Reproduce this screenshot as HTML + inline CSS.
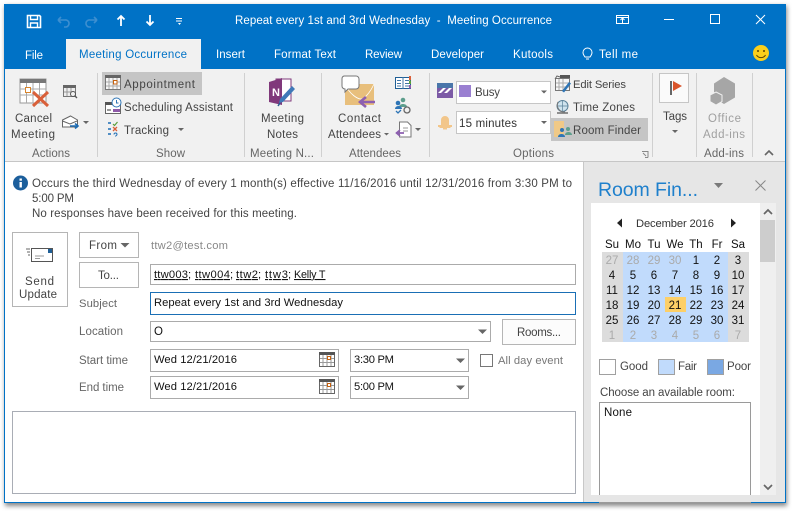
<!DOCTYPE html>
<html><head><meta charset="utf-8"><style>
html,body{margin:0;padding:0;background:#fff;width:792px;height:511px;overflow:hidden}
svg{display:block}
text{font-family:"Liberation Sans",sans-serif;font-size:11.5px;fill:#444;white-space:pre}
.c text{text-anchor:middle;fill:#111}
.c2 text{text-anchor:middle;fill:#aaa}
.b{fill:#fff;stroke:#ababab;stroke-width:1}
.ar{fill:#666}
.s{font-size:11.2px}
</style></head><body>
<svg width="792" height="511" viewBox="0 0 792 511" xmlns="http://www.w3.org/2000/svg" shape-rendering="geometricPrecision">
<defs><filter id="sh" x="-3%" y="-3%" width="106%" height="106%"><feGaussianBlur stdDeviation="2.500"/></filter></defs>
<rect x="0" y="0" width="792" height="511" fill="#fff"/>
<rect x="5" y="6" width="782" height="500" fill="#888" filter="url(#sh)"/>
<rect x="4" y="4" width="782" height="499" fill="#0072c6"/>
<rect x="5" y="69" width="780" height="433" fill="#fff"/>
<!-- ribbon -->
<rect x="5" y="69" width="780" height="92" fill="#f1f1f1"/>
<rect x="5" y="161" width="780" height="1" fill="#c6c6c6"/>
<!-- title bar icons -->
<g fill="none" stroke="#fff">
<path d="M27.500 15.500h12l1 1v11h-13z" stroke-width="1.600"/><path d="M30.500 15.500v4h7v-4M30.500 27v-4h7v4" stroke-width="1.400"/>
<g stroke="#3d8fd0" stroke-width="1.600"><path d="M58 20l3-3m-3 3l3 3m-3-3h7a3.500 3.500 0 0 1 1 7h-2"/><path d="M97 20l-3-3m3 3l-3 3m3-3h-7a3.500 3.500 0 0 0-1 7h2"/></g>
<g stroke-width="1.800"><path d="M121 26v-10m-3.500 3.500l3.500-3.500 3.500 3.500"/><path d="M150 15v10m-3.500-3.500l3.500 3.500 3.500-3.500"/></g>
<path d="M176 18.500h6M176 21h6" stroke-width="1"/>
<rect x="616.500" y="15.500" width="12" height="8"/><path d="M622.500 23v-5m-2 2l2-2 2 2"/><path d="M616 17.500h13"/>
<path d="M664 19.500h10"/><rect x="710.500" y="14.500" width="9" height="9"/><path d="M756 15l9 9m0-9l-9 9"/>
</g>
<path d="M178 23l1.500 2 1.500-2z" fill="#fff"/>
<text x="235" y="24" textLength="317" style="fill:#fff">Repeat every 1st and 3rd Wednesday  -  Meeting Occurrence</text>
<!-- tabs -->
<rect x="66" y="39" width="135" height="31" fill="#f1f1f1"/>
<text x="25" y="59" textLength="18" style="fill:#fff">File</text>
<text x="216" y="58" textLength="29" style="fill:#fff">Insert</text>
<text x="274" y="58" textLength="62" style="fill:#fff">Format Text</text>
<text x="365" y="58" textLength="37" style="fill:#fff">Review</text>
<text x="431" y="58" textLength="53" style="fill:#fff">Developer</text>
<text x="513" y="58" textLength="40" style="fill:#fff">Kutools</text>
<text x="599" y="58" textLength="39" style="fill:#fff">Tell me</text>
<text x="79" y="58" textLength="108" style="fill:#0072c6">Meeting Occurrence</text>
<path d="M585 57c-1.500-2-2-3-2-4.500a4.500 4.500 0 0 1 9 0c0 1.500-.5 2.500-2 4.500zM586 59h3" fill="none" stroke="#fff"/>
<circle cx="761" cy="53" r="8" fill="#fbcf1b"/><circle cx="758" cy="51" r="1" fill="#5a4300"/><circle cx="764" cy="51" r="1" fill="#5a4300"/><path d="M756.500 55c2 3.500 7 3.500 9 0" fill="none" stroke="#5a4300"/>
<!-- ribbon separators -->
<g fill="#d0d0d0"><rect x="97" y="73" width="1" height="84"/><rect x="244" y="73" width="1" height="84"/><rect x="321" y="73" width="1" height="84"/><rect x="429" y="73" width="1" height="84"/><rect x="652" y="73" width="1" height="84"/><rect x="696" y="73" width="1" height="84"/><rect x="752" y="73" width="1" height="84"/></g>
<!-- highlights -->
<rect x="102" y="72" width="100" height="23" fill="#c5c5c5"/>
<rect x="551" y="118" width="97" height="23" fill="#c5c5c5"/>
<!-- combos -->
<rect x="456.500" y="81.500" width="94" height="22" class="b" style="stroke:#c6c6c6"/><rect x="459" y="85" width="12" height="12" fill="#9a7fd1"/><path class="ar" d="M541 90.500h6l-3 3z"/>
<rect x="456.500" y="111.500" width="94" height="22" class="b" style="stroke:#c6c6c6"/><path class="ar" d="M541 121h6l-3 3z"/>
<!-- cancel meeting icon -->
<rect x="20" y="79" width="26" height="24" fill="#fff" stroke="#999"/><rect x="20" y="79" width="26" height="4" fill="#777"/>
<path d="M26.500 83v20M33 83v20M39.500 83v20M20 89h26M20 95h26" stroke="#aaa" fill="none"/>
<rect x="25.500" y="87.500" width="5" height="5" fill="#fff" stroke="#d8852c"/>
<path d="M33 92l15 14M48 92l-15 14" stroke="#d9603a" stroke-width="3" fill="none"/>
<!-- small find icon -->
<rect x="63.500" y="85.500" width="12" height="11" fill="#eee" stroke="#777"/><rect x="63" y="85" width="13" height="3" fill="#666"/><path d="M67 88v8M71 88v8M64 92h11" stroke="#999" fill="none"/>
<circle cx="73" cy="94" r="2.500" fill="#f1f1f1" stroke="#555"/><path d="M75 96l2 2" stroke="#555" stroke-width="1.300"/>
<!-- envelope reply -->
<path d="M62.500 120l8-4 7 4v7h-15z" fill="#fff" stroke="#666"/><path d="M62.500 121l7.500 3 7-3" fill="none" stroke="#666"/><path d="M70 126h7m-2-2.500l3 2.500-3 2.500" fill="none" stroke="#1d6db5" stroke-width="1.600"/>
<path class="ar" d="M83 121h6l-3 3z"/>
<!-- appointment icon -->
<rect x="105.500" y="76.500" width="15" height="13" fill="#f6f6f6" stroke="#777"/><rect x="105" y="75" width="16" height="3" fill="#666"/><path d="M109 78v11M113 78v11M117 78v11M106 82h14M106 86h14" stroke="#aaa" fill="none"/><rect x="113.500" y="80.500" width="3.500" height="3.500" fill="#fff" stroke="#c5610f"/>
<!-- scheduling assistant -->
<rect x="105.500" y="103.500" width="15" height="10" fill="#fff" stroke="#666"/><rect x="105" y="102" width="7" height="3" fill="#555"/><rect x="113" y="109" width="7" height="3" fill="#8e5aa8"/><rect x="107" y="109" width="4" height="2" fill="#999"/>
<circle cx="116.500" cy="102.500" r="4.500" fill="#fff" stroke="#2e75b6"/><path d="M116.500 100v3h2" stroke="#2e75b6" fill="none"/>
<!-- tracking -->
<path d="M108 123h3M108 129h3M108 134h3" stroke="#1d6db5" stroke-width="1.500"/><path d="M113 124l1.500 1.500 3-3.500" stroke="#5a9e3c" fill="none" stroke-width="1.200"/><path d="M113 127l4 4m0-4l-4 4" stroke="#d9603a" stroke-width="1.300"/><path d="M114 134.500c0-2 3-2 3 0 0 1-1.500 1-1.500 2" stroke="#1d6db5" fill="none"/>
<path class="ar" d="M178 128h6l-3 3z"/>
<text x="15" y="122" textLength="37">Cancel</text>
<text x="11" y="138" textLength="44">Meeting</text>
<text x="124" y="88" textLength="71">Appointment</text>
<text x="124" y="111" textLength="109">Scheduling Assistant</text>
<text x="124" y="134" textLength="45">Tracking</text>
<text x="261" y="122" textLength="43">Meeting</text>
<text x="267" y="138" textLength="31">Notes</text>
<text x="338" y="122" textLength="43">Contact</text>
<text x="328" y="138" textLength="53">Attendees</text>
<text x="475" y="96" textLength="25">Busy</text>
<text x="459" y="127" textLength="58" style="fill:#333">15 minutes</text>
<text x="573" y="88" textLength="53" class="s">Edit Series</text>
<text x="573" y="111" textLength="62">Time Zones</text>
<text x="573" y="134" textLength="68">Room Finder</text>
<text x="663" y="120" textLength="24">Tags</text>
<text x="32" y="157" textLength="38" style="fill:#666">Actions</text>
<text x="156" y="157" textLength="29" style="fill:#666">Show</text>
<text x="250" y="157" textLength="64" style="fill:#666">Meeting N...</text>
<text x="349" y="157" textLength="52" style="fill:#666">Attendees</text>
<text x="513" y="157" textLength="41" style="fill:#666">Options</text>
<text x="704" y="157" textLength="40" style="fill:#666">Add-ins</text>
<text x="708" y="122" textLength="33" style="fill:#a0a0a0">Office</text>
<text x="703" y="138" textLength="42" style="fill:#a0a0a0">Add-ins</text>
<!-- onenote -->
<path d="M276 79l15 0v22l-15 0z" fill="#fff" stroke="#80397b"/><path d="M269 82l13-4v27l-13-3z" fill="#80397b"/>
<text x="272" y="96" style="font-size:11px;font-weight:bold;fill:#fff">N</text>
<path d="M279 103l1-4 12-13 3 3-12 13z" fill="#3f79b8"/><path d="M278 106l2-3" stroke="#2a5a90" stroke-width="1.500"/>
<!-- contact attendees -->
<rect x="345" y="84" width="29" height="21" fill="#e8bf7c"/>
<path d="M345 84c5 11 13 15 16 15s9-6 13-15" fill="none" stroke="#fff" stroke-width=".8"/>
<path d="M344 76h12a3 3 0 0 1 3 3v7a3 3 0 0 1-3 3h-8l-3 3v-3a3 3 0 0 1-3-3v-7a3 3 0 0 1 2-3z" fill="#fff" stroke="#777"/>
<path d="M375 102h-15m6-5l-6 5 6 5" fill="none" stroke="#8d5fb0" stroke-width="2.600"/>
<!-- address book -->
<rect x="395.500" y="77.500" width="15" height="11" fill="#fff" stroke="#1f5f96"/><path d="M403 77v12M397 80.500h4M397 83.500h4M397 86h4M405 80.500h4M405 83.500h4M405 86h4" stroke="#4478a8" fill="none"/><rect x="409" y="76" width="2" height="4" fill="#d9603a"/><rect x="409" y="80.500" width="2" height="3.500" fill="#5a9e3c"/><rect x="409" y="85" width="2" height="3.500" fill="#8e5aa8"/>
<!-- people check -->
<circle cx="403" cy="100" r="2.300" fill="#5d9e8c"/><path d="M399 107c0-4 8-4 8 0z" fill="#5d9e8c"/><circle cx="398" cy="103" r="2.300" fill="#2e75b6"/><path d="M395 109c0-4 7-4 7 0z" fill="#2e75b6"/><path d="M396 111l2 2 3-3" stroke="#2e75b6" fill="none" stroke-width="1.300"/><circle cx="407" cy="110" r="3" fill="none" stroke="#666" stroke-width="1.300"/>
<!-- forward page -->
<path d="M399.500 122h8l3.500 3.500v11.500h-11.500z" fill="#fff" stroke="#777"/><path d="M403 128h5M403 131h5" stroke="#999"/><path d="M396 133h8m-4-3l-3.500 3 3.500 3" fill="none" stroke="#8d5fb0" stroke-width="1.700"/>
<path class="ar" d="M415 128h6l-3 3z"/><path class="ar" d="M384 133h5l-2.500 2.500z"/>
<!-- show as icon & reminder -->
<rect x="437" y="83" width="16" height="15" fill="#7c5aa6"/><rect x="437" y="83" width="16" height="5" fill="#4a76aa"/><path d="M438 93l5-5h3l-5 5zM444 93l5-5h3l-5 5z" fill="#fff"/>
<path d="M441 126v-6a4 4 0 0 1 8 0v6l2 2h-12z" fill="#f2c68a"/><rect x="438" y="125" width="14" height="2" fill="#f2c68a"/><rect x="443" y="128" width="4" height="1.500" fill="#f2c68a"/>
<!-- Edit series / time zones / room finder icons -->
<rect x="555.500" y="78.500" width="14" height="12" fill="#f8f8f8" stroke="#777"/><rect x="560" y="75" width="10" height="3" fill="#555"/><path d="M559 79v11M563 79v11M556 83h13M556 87h13" stroke="#aaa" fill="none"/><path d="M562 91l7-9 2 1.500-7 9z" fill="#2e75b6"/><path d="M555 79l2-3 3 1" fill="none" stroke="#666"/>
<circle cx="562.500" cy="106" r="5.500" fill="#cfe3ee" stroke="#5a8199"/><path d="M557 106h11M562.500 100.500v11" stroke="#5a8199" stroke-width=".7"/><path d="M557 113h11" stroke="#777" stroke-width="1.600"/><path d="M558 102a7 7 0 0 0 7 10" fill="none" stroke="#777"/>
<rect x="554" y="121" width="10" height="16" fill="#f0c987"/><circle cx="562" cy="130" r="2" fill="#2e75b6"/><path d="M558 137c0-4 7-4 7 0z" fill="#2e75b6"/><circle cx="568" cy="129" r="2" fill="#5d9e8c"/><path d="M565 135c0-4 7-4 7 0z" fill="#5d9e8c"/>
<path d="M642 151.500h6v6M645 157.500h3" stroke="#888" fill="none"/><path d="M643 153l3 3" stroke="#888"/>
<!-- tags -->
<rect x="659.500" y="73.500" width="29" height="29" fill="#fafafa" stroke="#c6c6c6"/><rect x="670" y="81" width="2" height="14" fill="#666"/><path d="M673 81l9 5-9 5z" fill="#d9542b"/><path class="ar" d="M672 130h6l-3 3z"/>
<!-- office add-ins -->
<path d="M724 77l11 6.500v14l-11 6.500-5-3v-6l-5-3v-8.500z" fill="#a6a6a6"/><path d="M716 92l6 3v6.500l-6 3.500-6-3.500v-6.500z" fill="#a6a6a6" stroke="#f1f1f1"/>
<path d="M765 155l4-4 4 4" fill="none" stroke="#666" stroke-width="1.600"/>
<!-- info -->
<circle cx="20.500" cy="183" r="7.500" fill="#1c5f9c"/><rect x="19.500" y="182" width="2.400" height="5.500" fill="#fff"/><rect x="19.500" y="178.500" width="2.400" height="2.200" fill="#fff"/>
<text x="32" y="187" textLength="540">Occurs the third Wednesday of every 1 month(s) effective 11/16/2016 until 12/31/2016 from 3:30 PM to</text>
<text x="32" y="202" textLength="42">5:00 PM</text>
<text x="32" y="217" textLength="265">No responses have been received for this meeting.</text>
<!-- send update -->
<rect x="12.500" y="232.500" width="55" height="74" class="b" style="stroke:#b5b5b5"/>
<rect x="31.500" y="248.500" width="21" height="13" fill="#fff" stroke="#555"/><rect x="48" y="249" width="4" height="4" fill="#1f5f96"/><path d="M35 256h9M35 258.500h5" stroke="#999"/><path d="M26 249h4M27 252h3M28 255h2" stroke="#666"/>
<text x="25" y="285" textLength="29">Send</text>
<text x="19" y="298" textLength="38">Update</text>
<!-- from / to -->
<rect x="79.500" y="232.500" width="59" height="25" class="b" style="stroke:#b5b5b5"/>
<text x="89" y="249" textLength="28">From</text><path d="M120.500 243h9l-4.500 4.500z" fill="#666"/>
<text x="151" y="249" textLength="77" class="s" style="fill:#888">ttw2@test.com</text>
<rect x="79.500" y="262.500" width="59" height="25" class="b" style="stroke:#b5b5b5"/>
<text x="98" y="279" textLength="21">To...</text>
<rect x="150.500" y="264.500" width="425" height="20" class="b"/>
<text x="154" y="278" class="s" style="fill:#111;text-decoration:underline" textLength="34">ttw003</text><text x="188" y="278" class="s" style="fill:#111">;</text>
<text x="195" y="278" class="s" style="fill:#111;text-decoration:underline" textLength="35">ttw004</text><text x="230" y="278" class="s" style="fill:#111">;</text>
<text x="236" y="278" class="s" style="fill:#111;text-decoration:underline" textLength="22">ttw2</text><text x="258" y="278" class="s" style="fill:#111">;</text>
<text x="265" y="278" class="s" style="fill:#111;text-decoration:underline" textLength="23">ttw3</text><text x="288" y="278" class="s" style="fill:#111">;</text>
<text x="294" y="278" style="fill:#111;text-decoration:underline;font-size:10.800px" textLength="31.500">Kelly T</text>
<!-- subject etc -->
<text x="79" y="307" textLength="38" class="s" style="fill:#666">Subject</text>
<rect x="150.500" y="292.500" width="425" height="22" fill="#fff" stroke="#1a6fb5"/>
<text x="154" y="306" textLength="189" class="s" style="fill:#111">Repeat every 1st and 3rd Wednesday</text>
<text x="79" y="335" textLength="44" style="fill:#666">Location</text>
<rect x="150.500" y="321.500" width="340" height="20" class="b"/>
<text x="154" y="335" textLength="8" style="fill:#111">O</text><path d="M478 329.500h9l-4.500 4.500z" fill="#666"/>
<rect x="502.500" y="319.500" width="73" height="25" fill="#fcfcfc" stroke="#b5b5b5"/>
<text x="517" y="336" textLength="44">Rooms...</text>
<text x="79" y="364" textLength="49" style="fill:#666">Start time</text>
<text x="79" y="391" textLength="45" style="fill:#666">End time</text>
<rect x="150.500" y="349.500" width="188" height="22" class="b"/>
<rect x="150.500" y="376.500" width="188" height="22" class="b"/>
<text x="154" y="363" textLength="83" class="s" style="fill:#111">Wed 12/21/2016</text>
<text x="154" y="390" textLength="83" class="s" style="fill:#111">Wed 12/21/2016</text>
<g id="cal"><rect x="319.500" y="353.500" width="15" height="13" fill="#fff" stroke="#666"/><rect x="319" y="352" width="16" height="3" fill="#555"/><path d="M323 355v11M327 355v11M331 355v11M320 358.500h14M320 362.500h14" stroke="#999" fill="none"/><rect x="327.500" y="356.500" width="3" height="3" fill="#fff" stroke="#c5610f"/></g>
<use href="#cal" y="27"/>
<rect x="350.500" y="349.500" width="118" height="22" class="b"/>
<rect x="350.500" y="376.500" width="118" height="22" class="b"/>
<text x="354" y="363" textLength="40" class="s" style="fill:#111">3:30 PM</text>
<text x="354" y="390" textLength="40" class="s" style="fill:#111">5:00 PM</text>
<path d="M456 358.500h9l-4.500 4.500zM456 385.500h9l-4.500 4.500z" fill="#666"/>
<rect x="480.500" y="354.500" width="12" height="12" fill="#fff" stroke="#777"/>
<text x="498" y="364" textLength="65" class="s" style="fill:#777">All day event</text>
<rect x="12.500" y="411.500" width="563" height="82" fill="#fff" stroke="#a9adb5"/>
<!-- right pane -->
<rect x="583" y="162" width="202" height="340" fill="#e6e6e6"/>
<rect x="583" y="162" width="1" height="340" fill="#c8c8c8"/>
<text x="598" y="196" textLength="100" style="font-size:19.500px;fill:#1f80cc">Room Fin...</text>
<path d="M714 183h9l-4.500 5z" fill="#7a7a7a"/>
<path d="M755.500 180.500l10 10m0-10l-10 10" stroke="#888" fill="none"/>
<rect x="591" y="203" width="169" height="292" fill="#fff"/>
<rect x="760" y="203" width="16" height="292" fill="#efefef"/>
<rect x="760" y="220" width="15" height="42" fill="#cdcdcd"/>
<path d="M764 214l4-4 4 4M764 485l4 4 4-4" fill="none" stroke="#666" stroke-width="1.700"/>
<path d="M622 218.500v9l-5-4.500zM731 218.500v9l5-4.500z" fill="#222"/>
<text x="636" y="227" textLength="78" class="s" style="fill:#333">December 2016</text>
<!-- calendar -->
<rect x="602" y="252" width="147" height="90" fill="#dcdcdc"/>
<rect x="623" y="252" width="105" height="90" fill="#c1dbfc"/>
<rect x="665" y="297" width="21" height="15" fill="#fdcf67"/>
<g class="c">
<text x="612" y="248">Su</text><text x="633" y="248">Mo</text><text x="654" y="248">Tu</text><text x="675" y="248">We</text><text x="696" y="248">Th</text><text x="717" y="248">Fr</text><text x="738" y="248">Sa</text>
<text x="696" y="264">1</text><text x="717" y="264">2</text><text x="738" y="264">3</text>
<text x="612" y="279">4</text><text x="633" y="279">5</text><text x="654" y="279">6</text><text x="675" y="279">7</text><text x="696" y="279">8</text><text x="717" y="279">9</text><text x="738" y="279">10</text>
<text x="612" y="294">11</text><text x="633" y="294">12</text><text x="654" y="294">13</text><text x="675" y="294">14</text><text x="696" y="294">15</text><text x="717" y="294">16</text><text x="738" y="294">17</text>
<text x="612" y="309">18</text><text x="633" y="309">19</text><text x="654" y="309">20</text><text x="675" y="309">21</text><text x="696" y="309">22</text><text x="717" y="309">23</text><text x="738" y="309">24</text>
<text x="612" y="324">25</text><text x="633" y="324">26</text><text x="654" y="324">27</text><text x="675" y="324">28</text><text x="696" y="324">29</text><text x="717" y="324">30</text><text x="738" y="324">31</text>
</g>
<g class="c2">
<text x="612" y="264">27</text><text x="633" y="264">28</text><text x="654" y="264">29</text><text x="675" y="264">30</text>
<text x="612" y="339">1</text><text x="633" y="339">2</text><text x="654" y="339">3</text><text x="675" y="339">4</text><text x="696" y="339">5</text><text x="717" y="339">6</text><text x="738" y="339">7</text>
</g>
<!-- legend -->
<rect x="599.500" y="359.500" width="16" height="15" fill="#fff" stroke="#a0a0a0"/>
<rect x="658.500" y="359.500" width="16" height="15" fill="#c1dbfc" stroke="#a0a0a0"/>
<rect x="707.500" y="359.500" width="16" height="15" fill="#7aa8e3" stroke="#a0a0a0"/>
<text x="620" y="370" textLength="28">Good</text>
<text x="678" y="370" textLength="19">Fair</text>
<text x="727" y="370" textLength="24">Poor</text>
<text x="600" y="396" textLength="135">Choose an available room:</text>
<rect x="599.500" y="402.500" width="151" height="100" fill="#fff" stroke="#9a9a9a"/>
<rect x="591" y="495" width="194" height="7" fill="#e6e6e6"/>
<text x="604" y="416" textLength="28" style="fill:#111">None</text>
</svg>
</body></html>
